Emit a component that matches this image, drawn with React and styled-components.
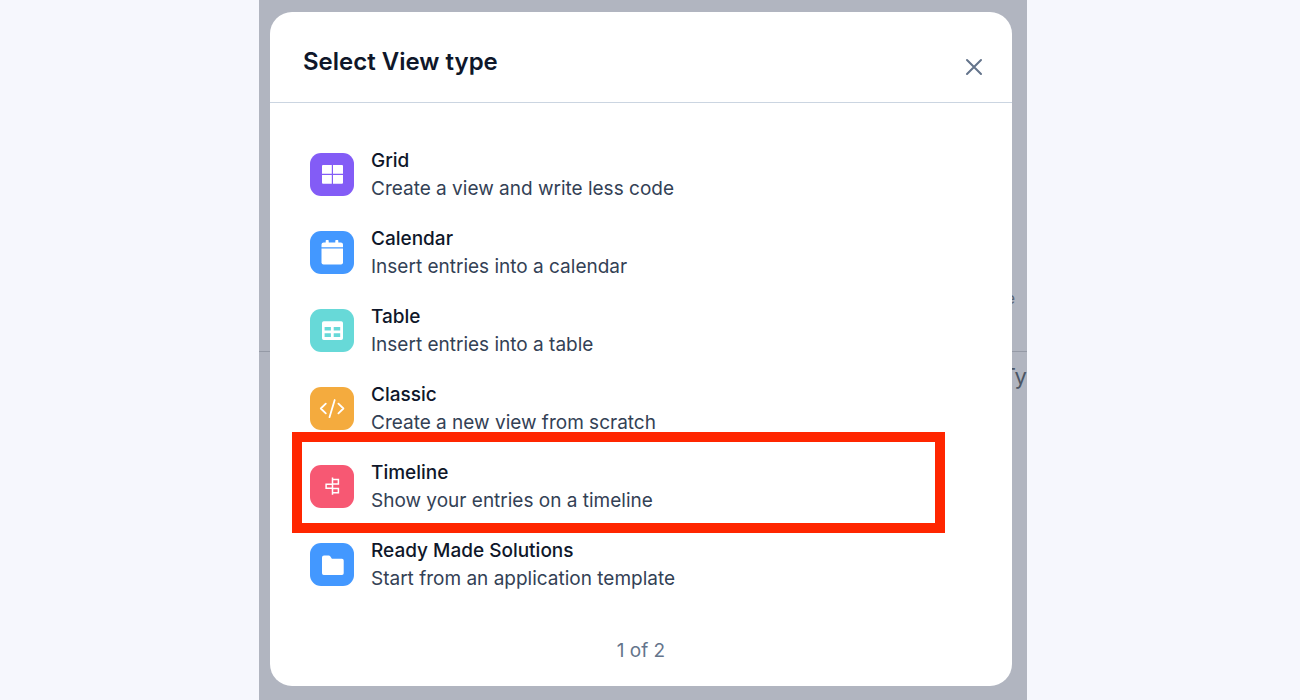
import styled, { createGlobalStyle } from "styled-components";

const GlobalStyle = createGlobalStyle`
  * {
    box-sizing: border-box;
  }
  body {
    margin: 0;
    background: #f6f7fd;
    color: #0f172a;
    font-family: Inter, "Liberation Sans", sans-serif;
  }
`;

const Page = styled.main`
  display: flex;
  justify-content: center;
  min-height: 100vh;
  padding-right: 14px;
`;

const Backdrop = styled.div`
  position: relative;
  overflow: hidden;
  width: 100%;
  max-width: 768px;
  padding: 12px 15px 14px 11px;
  background: #b1b5c0;
`;

/* the form underneath, visible only at the edge of the dialog */
const Behind = styled.div`
  position: absolute;
  inset: 286px 0 auto 0;
  display: flex;
  flex-direction: column;
  align-items: flex-end;
  color: #4b5565;
`;

const BehindLabel = styled.span`
  padding-right: 12px;
  font-size: 16px;
  line-height: 24px;
  color: #5d6575;
`;

const BehindField = styled.span`
  width: 100%;
  margin-top: 41px;
  padding-top: 12px;
  border-top: 1px solid #959aa6;
  font-size: 22px;
  line-height: 24px;
  text-align: right;
`;

const Dialog = styled.section`
  position: relative;
  border-radius: 22px;
  background: #ffffff;
`;

const Header = styled.header`
  display: flex;
  align-items: center;
  justify-content: space-between;
  height: 91px;
  padding: 20px 26px 0 33px;
  border-bottom: 1px solid #cbd5e1;
`;

const Title = styled.h1`
  margin: 0 0 10px;
  font-size: 24px;
  font-weight: 600;
  line-height: 32px;
`;

const Close = styled.button`
  display: flex;
  padding: 0;
  border: 0;
  background: none;
  color: #64748b;
  cursor: pointer;
`;

const List = styled.ul`
  display: flex;
  flex-direction: column;
  gap: 22px;
  margin: 0;
  padding: 44px 85px 44px 40px;
  list-style: none;
`;

const Item = styled.li`
  position: relative;
`;

const Highlight = styled.div`
  position: absolute;
  inset: -27px -18px -18px;
  border: 10px solid #ff2600;
  pointer-events: none;
`;

const Option = styled.button`
  display: flex;
  align-items: flex-start;
  gap: 17px;
  width: 100%;
  padding: 0;
  border: 0;
  background: none;
  color: inherit;
  font-family: inherit;
  text-align: left;
  cursor: pointer;
`;

const Tile = styled.span`
  display: flex;
  justify-content: center;
  width: 44px;
  height: 43px;
  margin-top: 6px;
  padding-top: 7px;
  border-radius: 11px;
  background: ${(props) => props.$color};
`;

const Text = styled.span`
  display: flex;
  flex-direction: column;
  font-size: 19px;
  line-height: 28px;
`;

const Name = styled.span`
  font-weight: 500;
`;

const Desc = styled.span`
  color: #334155;
`;

const Pager = styled.p`
  margin: 0;
  padding-bottom: 21px;
  color: #64748b;
  font-size: 19px;
  line-height: 28px;
  text-align: center;
`;

const Icon = ({ children }) => (
  <svg width="28" height="28" viewBox="0 0 28 28" fill="#ffffff" aria-hidden="true">
    {children}
  </svg>
);

const GridIcon = () => (
  <Icon>
    <path d="M5 5H13.8V13.7H4V6Q4 5 5 5ZM15 5H24Q25 5 25 6V13.7H15ZM4 14.9H13.8V23.7H5Q4 23.7 4 22.7ZM15 14.9H25V22.7Q25 23.7 24 23.7H15Z" />
  </Icon>
);

const CalendarIcon = () => (
  <Icon>
    <path d="M7.7 4.6V2.8Q7.7 2.1 8.4 2.1H10Q10.7 2.1 10.7 2.8V4.6H17.3V2.8Q17.3 2.1 18 2.1H19.6Q20.3 2.1 20.3 2.8V4.6H22.8Q25 4.6 25 6.6V9.2H3.5V6.6Q3.5 4.6 5.7 4.6Z" />
    <path d="M3.5 10.6H25V24.6Q25 26.6 23 26.6H5.5Q3.5 26.6 3.5 24.6Z" />
  </Icon>
);

const TableIcon = () => (
  <Icon>
    <path
      fillRule="evenodd"
      d="M5.8 5.2H23.2Q25 5.2 25 7V22.2Q25 24 23.2 24H5.8Q4 24 4 22.2V7Q4 5.2 5.8 5.2ZM6.6 11V14.6H12.9V11ZM15.7 11V14.6H22.2V11ZM6.6 17.2V20.9H12.9V17.2ZM15.7 17.2V20.9H22.2V17.2Z"
    />
  </Icon>
);

const CodeIcon = () => (
  <Icon>
    <path
      d="M7.8 9.6L2.8 14.5L7.8 19.4M20.4 9.6L25.4 14.5L20.4 19.4M16.7 6L11.5 23.2"
      fill="none"
      stroke="#ffffff"
      strokeWidth="1.8"
      strokeLinecap="round"
      strokeLinejoin="round"
    />
  </Icon>
);

const TimelineIcon = () => (
  <Icon>
    <path
      d="M14.5 5.5V22.8M14.5 7.6H20.4V11.9H14.5M14.5 12.3H8.1V16.2H14.5M14.5 16.6H20.4V20.8H14.5"
      fill="none"
      stroke="#ffffff"
      strokeWidth="1.5"
    />
  </Icon>
);

const FolderIcon = () => (
  <Icon>
    <path d="M6 5.5H10.7Q11.7 5.5 12.2 6.3L13.9 8.8H24Q25.7 8.8 25.7 10.5V23.3Q25.7 25 24 25H5.7Q4 25 4 23.3V7.5Q4 5.5 6 5.5Z" />
  </Icon>
);

const views = [
  { name: "Grid", desc: "Create a view and write less code", color: "#835cf6", icon: GridIcon },
  { name: "Calendar", desc: "Insert entries into a calendar", color: "#4398ff", icon: CalendarIcon },
  { name: "Table", desc: "Insert entries into a table", color: "#67d9d8", icon: TableIcon },
  { name: "Classic", desc: "Create a new view from scratch", color: "#f4ab3e", icon: CodeIcon },
  { name: "Timeline", desc: "Show your entries on a timeline", color: "#f75873", icon: TimelineIcon, marked: true },
  { name: "Ready Made Solutions", desc: "Start from an application template", color: "#4398ff", icon: FolderIcon },
];

const App = () => {
  return (
    <Page>
      <GlobalStyle />
      <Backdrop>
        <Behind aria-hidden="true">
          <BehindLabel>e</BehindLabel>
          <BehindField>Ty</BehindField>
        </Behind>
        <Dialog role="dialog" aria-labelledby="dialog-title">
          <Header>
            <Title id="dialog-title">Select View type</Title>
            <Close type="button" aria-label="Close">
              <svg width="24" height="24" viewBox="0 0 24 24" fill="none" stroke="currentColor" strokeWidth="2" strokeLinecap="round">
                <path d="M5 5L19 19M19 5L5 19" />
              </svg>
            </Close>
          </Header>
          <List>
            {views.map((view) => (
              <Item key={view.name}>
                <Option type="button">
                  <Tile $color={view.color}>
                    <view.icon />
                  </Tile>
                  <Text>
                    <Name>{view.name}</Name>
                    <Desc>{view.desc}</Desc>
                  </Text>
                </Option>
                {view.marked && <Highlight />}
              </Item>
            ))}
          </List>
          <Pager>1 of 2</Pager>
        </Dialog>
      </Backdrop>
    </Page>
  );
};

export default App;
